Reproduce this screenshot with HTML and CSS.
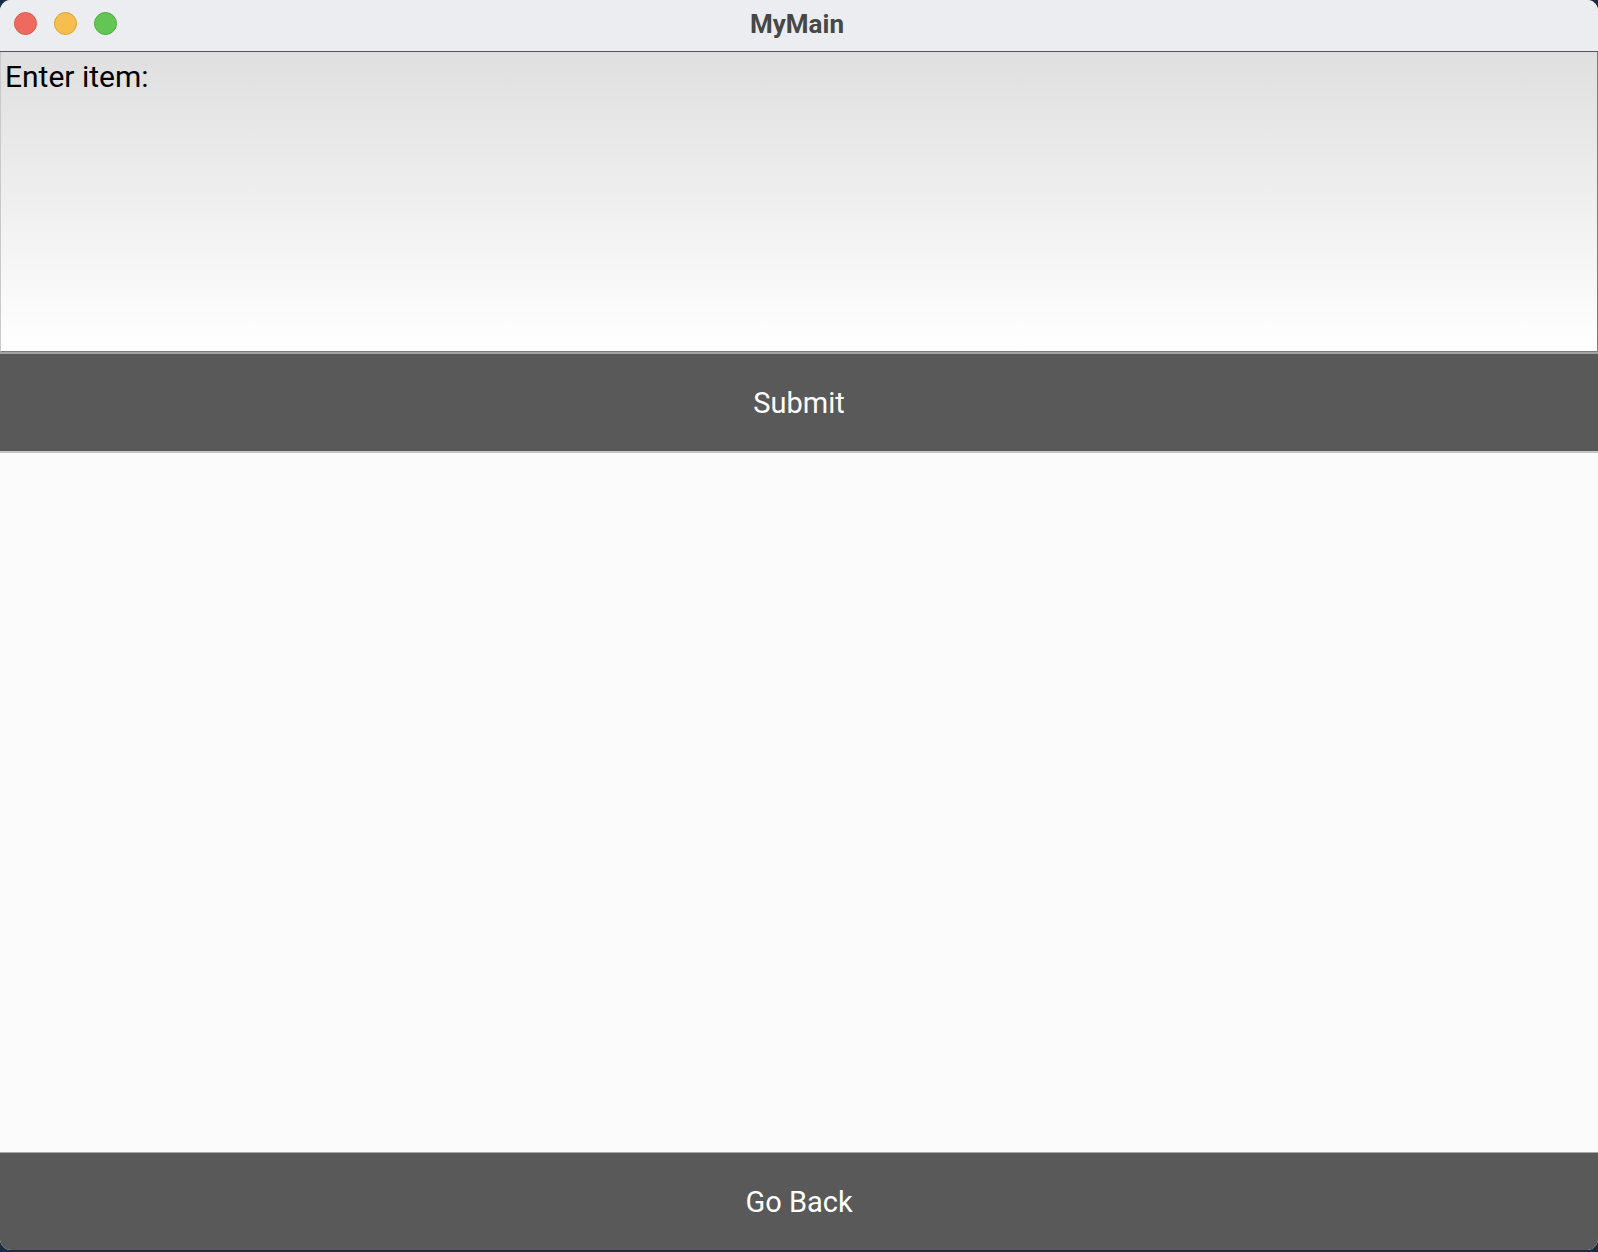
FILE: index.html
```html
<!DOCTYPE html>
<html lang="en">
<head>
  <meta charset="UTF-8">
  <title>MyMain</title>
  <link rel="stylesheet" href="styles.css">
</head>
<body>
  <div class="window">
    <div class="titlebar">
      <div class="lights">
        <span class="light red"></span>
        <span class="light yellow"></span>
        <span class="light green"></span>
      </div>
      <div class="title">MyMain</div>
    </div>
    <div class="entry">
      <label class="entry-label">Enter item:</label>
    </div>
    <button class="btn submit">Submit</button>
    <div class="list"></div>
    <button class="btn back">Go Back</button>
  </div>
</body>
</html>
```

FILE: styles.css
```css
html, body {
  margin: 0;
  height: 100%;
}
body {
  background: #1b2a46;
  font-family: Roboto, 'Liberation Sans', Arial, sans-serif;
}
.window {
  height: 1250px;
  display: flex;
  flex-direction: column;
  background: #fbfbfb;
  border-radius: 11px;
  overflow: hidden;
}
.titlebar {
  position: relative;
  height: 51px;
  flex-shrink: 0;
  background: #ecedf0;
  border-bottom: 1px solid #555;
  display: flex;
  align-items: center;
  justify-content: center;
}
.lights {
  position: absolute;
  left: 14px;
  top: 12px;
  display: flex;
  gap: 17px;
}
.light {
  width: 23px;
  height: 23px;
  border-radius: 50%;
  box-sizing: border-box;
}
.red { background: #ee6a5f; border: 1px solid #d65b50; }
.yellow { background: #f5be4f; border: 1px solid #d9a33e; }
.green { background: #62c554; border: 1px solid #52a946; }
.title {
  font-weight: bold;
  font-size: 26px;
  color: #474747;
  margin-top: -4px;
  margin-left: -4px;
}
.entry {
  height: 299px;
  flex-shrink: 0;
  border: 1px solid #7c7c7c;
  border-left-color: #c9c9c9;
  border-top: none;
  background: linear-gradient(#dfdfdf, #ffffff);
  box-sizing: content-box;
}
.entry-label {
  display: block;
  padding: 7px 0 0 4px;
  font-size: 30px;
  color: #000;
}
.btn {
  display: block;
  width: 100%;
  height: 97px;
  flex-shrink: 0;
  border: none;
  background: #595959;
  color: #fff;
  font-family: Roboto, 'Liberation Sans', Arial, sans-serif;
  font-size: 29px;
  padding: 0;
}
.submit {
  border-top: 2px solid #a4a4a4;
  border-bottom: 2px solid #c6c6c6;
  box-sizing: content-box;
}
.list {
  flex: 1;
}
.back {
  border-top: 1px solid #a8a8a8;
  box-sizing: content-box;
}
```
